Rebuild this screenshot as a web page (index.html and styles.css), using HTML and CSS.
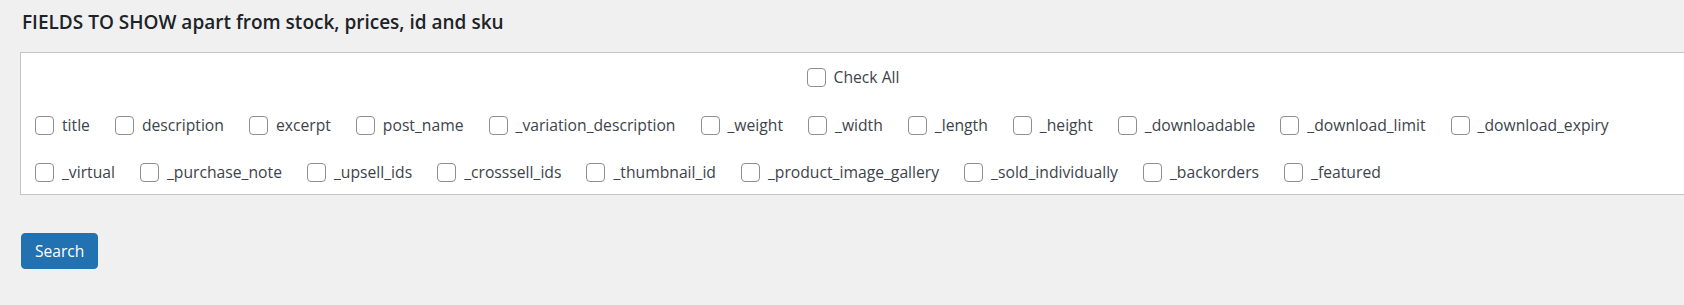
FILE: index.html
```html
<!DOCTYPE html>
<html lang="en">
<head>
<meta charset="utf-8">
<title>Fields to show</title>
<link rel="stylesheet" href="styles.css">
</head>
<body>
<div class="wrap">
  <h2 class="section-title">FIELDS TO SHOW apart from stock, prices, id and sku</h2>
  <div class="fields-box">
    <div class="check-all-row">
      <label class="field"><input type="checkbox" class="cb"><span>Check All</span></label>
    </div>
    <div class="field-list">
      <label class="field"><input type="checkbox" class="cb"><span>title</span></label>
      <label class="field"><input type="checkbox" class="cb"><span>description</span></label>
      <label class="field"><input type="checkbox" class="cb"><span>excerpt</span></label>
      <label class="field"><input type="checkbox" class="cb"><span>post_name</span></label>
      <label class="field"><input type="checkbox" class="cb"><span>_variation_description</span></label>
      <label class="field"><input type="checkbox" class="cb"><span>_weight</span></label>
      <label class="field"><input type="checkbox" class="cb"><span>_width</span></label>
      <label class="field"><input type="checkbox" class="cb"><span>_length</span></label>
      <label class="field"><input type="checkbox" class="cb"><span>_height</span></label>
      <label class="field"><input type="checkbox" class="cb"><span>_downloadable</span></label>
      <label class="field"><input type="checkbox" class="cb"><span>_download_limit</span></label>
      <label class="field"><input type="checkbox" class="cb"><span>_download_expiry</span></label>
      <label class="field"><input type="checkbox" class="cb"><span>_virtual</span></label>
      <label class="field"><input type="checkbox" class="cb"><span>_purchase_note</span></label>
      <label class="field"><input type="checkbox" class="cb"><span>_upsell_ids</span></label>
      <label class="field"><input type="checkbox" class="cb"><span>_crosssell_ids</span></label>
      <label class="field"><input type="checkbox" class="cb"><span>_thumbnail_id</span></label>
      <label class="field"><input type="checkbox" class="cb"><span>_product_image_gallery</span></label>
      <label class="field"><input type="checkbox" class="cb"><span>_sold_individually</span></label>
      <label class="field"><input type="checkbox" class="cb"><span>_backorders</span></label>
      <label class="field"><input type="checkbox" class="cb"><span>_featured</span></label>
    </div>
  </div>
  <button type="button" class="btn-primary">Search</button>
</div>
</body>
</html>
```
FILE: styles.css
```css
html {
  overflow: hidden;
}
body {
  margin: 0;
  background: #f0f0f1;
  font-family: "Open Sans", "Noto Sans", sans-serif;
  color: #3c434a;
}
.wrap {
  padding: 0 0 0 20px;
}
.section-title {
  margin: 0;
  padding: 10px 0 0 2px;
  height: 52px;
  box-sizing: border-box;
  font-size: 19px;
  font-weight: 600;
  line-height: 24px;
  color: #1d2327;
}
.fields-box {
  width: 1666px;
  box-sizing: border-box;
  background: #fff;
  border: 1px solid #c3c4c7;
  padding: 14px 0 12px 14px;
}
.check-all-row {
  display: flex;
  justify-content: center;
  padding-right: 14px;
  margin-bottom: 28px;
}
.field-list {
  display: flex;
  flex-wrap: wrap;
  column-gap: 25px;
  row-gap: 27px;
}
.field {
  display: flex;
  align-items: center;
  gap: 8px;
  font-size: 15.7px;
  line-height: 20px;
  height: 20px;
  color: #3c434a;
}
.cb {
  appearance: none;
  -webkit-appearance: none;
  margin: 0;
  width: 19px;
  height: 19px;
  box-sizing: border-box;
  border: 1px solid #8c8f94;
  border-radius: 4px;
  background: #fff;
}
.btn-primary {
  display: block;
  margin-top: 38px;
  margin-left: 1px;
  height: 36px;
  padding: 0 13px;
  background: #2271b1;
  border: 1px solid #2271b1;
  border-radius: 4px;
  color: #fff;
  font-family: "Open Sans", "Noto Sans", sans-serif;
  font-size: 15.6px;
}
```
